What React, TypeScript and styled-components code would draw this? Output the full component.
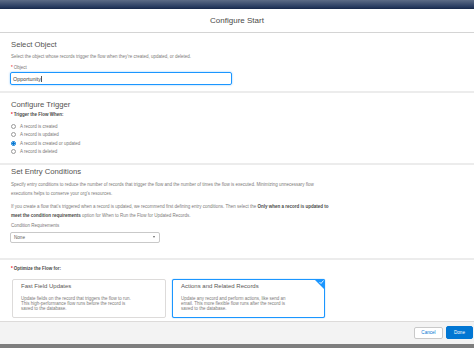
import React from 'react';
import styled, { createGlobalStyle } from 'styled-components';

const GlobalStyle = createGlobalStyle`
  html, body {
    margin: 0;
    padding: 0;
    background: #ffffff;
  }
  body {
    font-family: "Liberation Sans", Arial, sans-serif;
    color: #3e3e3c;
  }
`;

const Page = styled.div`
  width: 474px;
  height: 348px;
  display: flex;
  flex-direction: column;
  overflow: hidden;
  background: #ffffff;
`;

const TopBar = styled.div`
  flex: none;
  height: 9px;
  background: linear-gradient(#5d6c86, #2c3f63 70%, #17284a);
`;

const Header = styled.div`
  flex: none;
  height: 23px;
  display: flex;
  align-items: center;
  justify-content: center;
  font-size: 8px;
  color: #4a4a48;
  border-bottom: 1px solid #d4d4d4;
`;

const Section = styled.div<{ $pt: number; $pb: number; $divider?: boolean }>`
  padding: ${(p) => p.$pt}px 10px ${(p) => p.$pb}px 10px;
  border-top: ${(p) => (p.$divider ? '2px solid #ececec' : 'none')};
  display: flex;
  flex-direction: column;
  align-items: flex-start;
`;

const Title = styled.div`
  font-size: 7.7px;
  line-height: 10px;
  color: #555452;
  padding-left: 1px;
`;

const Text = styled.div<{ $mt: number; $lh?: number }>`
  margin-top: ${(p) => p.$mt}px;
  font-size: 4.5px;
  line-height: ${(p) => p.$lh ?? 6}px;
  color: #7d7b79;
  white-space: nowrap;
  padding-left: 1px;
  b {
    color: #4a4a48;
  }
`;

const Label = styled.div<{ $mt: number; $bold?: boolean }>`
  margin-top: ${(p) => p.$mt}px;
  font-size: 4.5px;
  line-height: 6px;
  color: ${(p) => (p.$bold ? '#4a4a48' : '#7a7876')};
  font-weight: ${(p) => (p.$bold ? 700 : 400)};
  padding-left: 1px;
`;

const Req = styled.span`
  color: #ea001e;
  margin-right: 1px;
`;

const Input = styled.div`
  margin-top: 1px;
  width: 222px;
  height: 13px;
  box-sizing: border-box;
  border: 1px solid #1b96ff;
  border-radius: 2px;
  box-shadow: 0 0 2px rgba(27, 150, 255, 0.55);
  display: flex;
  align-items: center;
  padding-left: 2px;
  font-size: 5.4px;
  color: #3e3e3c;
`;

const Caret = styled.span`
  display: inline-block;
  width: 0.7px;
  height: 6px;
  margin-left: 0.5px;
  background: #555;
`;

const RadioList = styled.div`
  margin-top: 3.5px;
  display: flex;
  flex-direction: column;
`;

const RadioRow = styled.div`
  height: 8.5px;
  display: flex;
  align-items: center;
  gap: 4px;
  padding-left: 1px;
  font-size: 4.5px;
  color: #7a7876;
`;

const RadioDot = styled.span<{ $on?: boolean }>`
  width: 5px;
  height: 5px;
  box-sizing: border-box;
  border-radius: 50%;
  border: 0.7px solid ${(p) => (p.$on ? '#0176d3' : '#9a9a9a')};
  background: ${(p) => (p.$on ? 'radial-gradient(circle, #0176d3 0 1.2px, #ffffff 1.4px)' : '#ffffff')};
`;

const Select = styled.div`
  margin-top: 3px;
  width: 150px;
  height: 11px;
  box-sizing: border-box;
  border: 1px solid #c9c9c9;
  border-radius: 2px;
  display: flex;
  align-items: center;
  justify-content: space-between;
  padding: 0 4px 0 3px;
  font-size: 4.6px;
  color: #5c5c5c;
`;

const Arrow = styled.span`
  width: 0;
  height: 0;
  border-left: 1.6px solid transparent;
  border-right: 1.6px solid transparent;
  border-top: 2px solid #666;
`;

const Cards = styled.div`
  margin-top: 6.7px;
  margin-left: 2px;
  display: grid;
  grid-template-columns: 154px 153px;
  gap: 6px;
`;

const Card = styled.div<{ $selected?: boolean }>`
  position: relative;
  height: 38.7px;
  box-sizing: border-box;
  padding: 3.5px 8px 0 8px;
  border: 1px solid ${(p) => (p.$selected ? '#1b96ff' : '#dddbda')};
  border-radius: 2px;
  box-shadow: ${(p) => (p.$selected ? '0 0 1px #1b96ff' : 'none')};
  background: #ffffff;
`;

const CardTitle = styled.div`
  font-size: 6px;
  line-height: 7px;
  color: #5a5856;
`;

const CardText = styled.div`
  margin-top: 6.4px;
  font-size: 4.5px;
  line-height: 4.85px;
  color: #7d7b79;
  white-space: nowrap;
`;

const Check = styled.div`
  position: absolute;
  top: -1px;
  right: -1px;
  width: 11px;
  height: 11px;
  background: #1b96ff;
  clip-path: polygon(0 0, 100% 0, 100% 100%);
  border-top-right-radius: 2px;
  svg {
    position: absolute;
    top: 1px;
    right: 1px;
  }
`;

const Footer = styled.div`
  flex: none;
  height: 22.3px;
  border-top: 1px solid #dddbda;
  background: #f3f3f3;
  display: flex;
  align-items: center;
  justify-content: flex-end;
  gap: 3px;
  padding-right: 1px;
`;

const Button = styled.div<{ $brand?: boolean }>`
  height: ${(p) => (p.$brand ? 13 : 12)}px;
  width: ${(p) => (p.$brand ? 27 : 29)}px;
  box-sizing: border-box;
  border-radius: 2px;
  border: 1px solid ${(p) => (p.$brand ? '#0176d3' : '#c9c9c9')};
  background: ${(p) => (p.$brand ? '#0176d3' : '#ffffff')};
  color: ${(p) => (p.$brand ? '#ffffff' : '#0176d3')};
  font-size: 4.6px;
  display: flex;
  align-items: center;
  justify-content: center;
`;

const Backdrop = styled.div`
  flex: 1;
  background: #7e7e7e;
`;

const triggers = [
  'A record is created',
  'A record is updated',
  'A record is created or updated',
  'A record is deleted',
];

export default function App() {
  return (
    <Page>
      <GlobalStyle />
      <TopBar />
      <Header>Configure Start</Header>

      <Section $pt={7} $pb={6}>
        <Title>Select Object</Title>
        <Text $mt={4}>Select the object whose records trigger the flow when they're created, updated, or deleted.</Text>
        <Label $mt={5}>
          <Req>*</Req>Object
        </Label>
        <Input>
          Opportunity
          <Caret />
        </Input>
      </Section>

      <Section $pt={7} $pb={7.5} $divider>
        <Title>Configure Trigger</Title>
        <Label $mt={2.3} $bold>
          <Req>*</Req>Trigger the Flow When:
        </Label>
        <RadioList>
          {triggers.map((t, i) => (
            <RadioRow key={t}>
              <RadioDot $on={i === 2} />
              {t}
            </RadioRow>
          ))}
        </RadioList>
      </Section>

      <Section $pt={2} $pb={15} $divider>
        <Title>Set Entry Conditions</Title>
        <Text $mt={3.5} $lh={8.7}>
          Specify entry conditions to reduce the number of records that trigger the flow and the number of times the flow is executed. Minimizing unnecessary flow
          <br />
          executions helps to conserve your org's resources.
        </Text>
        <Text $mt={4.7} $lh={8.7}>
          If you create a flow that's triggered when a record is updated, we recommend first defining entry conditions. Then select the <b>Only when a record is updated to</b>
          <br />
          <b>meet the condition requirements</b> option for When to Run the Flow for Updated Records.
        </Text>
        <Label $mt={2.7}>Condition Requirements</Label>
        <Select>
          None
          <Arrow />
        </Select>
      </Section>

      <Section $pt={6.3} $pb={3} $divider>
        <Label $mt={0} $bold>
          <Req>*</Req>Optimize the Flow for:
        </Label>
        <Cards>
          <Card>
            <CardTitle>Fast Field Updates</CardTitle>
            <CardText>
              Update fields on the record that triggers the flow to run.
              <br />
              This high-performance flow runs before the record is
              <br />
              saved to the database.
            </CardText>
          </Card>
          <Card $selected>
            <CardTitle>Actions and Related Records</CardTitle>
            <CardText>
              Update any record and perform actions, like send an
              <br />
              email. This more flexible flow runs after the record is
              <br />
              saved to the database.
            </CardText>
            <Check>
              <svg width="5" height="4" viewBox="0 0 10 8">
                <path d="M1 4 L4 7 L9 1" fill="none" stroke="#ffffff" strokeWidth="1.8" />
              </svg>
            </Check>
          </Card>
        </Cards>
      </Section>

      <Footer>
        <Button>Cancel</Button>
        <Button $brand>Done</Button>
      </Footer>
      <Backdrop />
    </Page>
  );
}
